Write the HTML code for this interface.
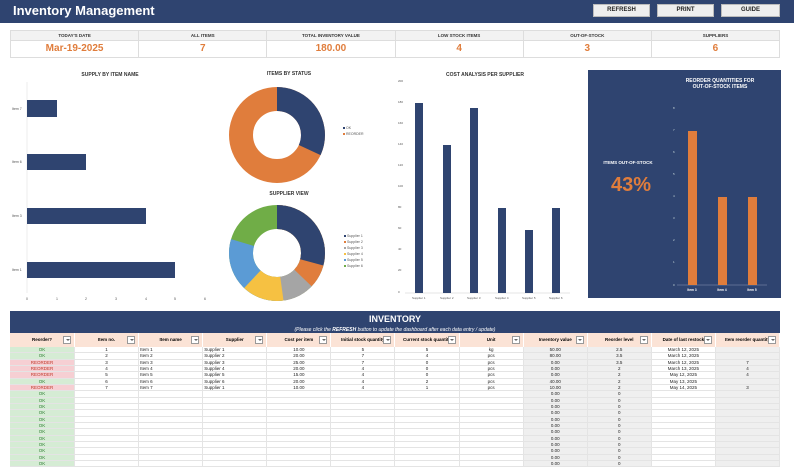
<!DOCTYPE html>
<html><head><meta charset="utf-8"><style>
*{margin:0;padding:0;box-sizing:border-box}
body{width:794px;height:462px;overflow:hidden;background:#fff;font-family:"Liberation Sans",sans-serif;position:relative}
.hdr{position:absolute;left:0;top:0;width:794px;height:23px;background:#2f4470}
.hdr h1{position:absolute;left:13px;top:3px;color:#fff;font-size:13px;font-weight:bold}
.btn{position:absolute;top:4px;height:13px;background:#eee;border:1px solid #bbb;font-size:6px;font-weight:bold;text-align:center;line-height:11px;color:#222}
.kpi{position:absolute;left:10px;top:30px;width:770px;height:28px;border:1px solid #ddd;display:flex}
.kpi div{flex:1;border-right:1px solid #ddd;text-align:center}
.kpi div:last-child{border-right:none}
.kpi b{display:block;height:10px;background:#f2f2f2;border-bottom:1px solid #ddd;font-size:4.5px;line-height:10px;color:#333}
.kpi span{display:block;font-size:10px;font-weight:bold;color:#e07d3c;line-height:16px}
svg text{font-family:"Liberation Sans",sans-serif}
.tb{position:absolute;left:10px;top:311px;width:770px}
.tbh{height:22px;background:#2f4470;color:#fff;text-align:center}
.tbh b{display:block;font-size:9px;padding-top:3px;line-height:10px}
.tbh i{display:block;font-size:5px;margin-top:1px;line-height:6px}
.hr{display:flex;height:14px}
.hr div{flex:0 0 64.1px;background:#fbe3d6;font-size:4.5px;font-weight:bold;position:relative;border-right:1px solid #fff;text-align:center;line-height:14px}
.hr div:first-child{flex-basis:65px}
.hr em{position:absolute;right:3px;top:3px;width:8px;height:8px;border:1px solid #999;background:#fff}
.hr em:after{content:"";position:absolute;left:1.5px;top:2px;border-left:2px solid transparent;border-right:2px solid transparent;border-top:2px solid #666}
.r{display:flex;height:6.33px;overflow:hidden}
.r div{flex:0 0 64.1px;font-size:4.5px;line-height:5.5px;height:6.33px;border-right:1px solid #e4e4e4;border-bottom:1px solid #e4e4e4;text-align:center;color:#222;white-space:nowrap;overflow:hidden}
.r div:first-child{flex-basis:65px}
.r div.l{text-align:left;padding-left:1px}
.r div.ok{background:#d5ecd4;color:#2e7d32}
.r div.ro{background:#f6cfd3;color:#c0392b}
.r div.g{background:#efefef}
</style></head><body>
<div class="hdr"><h1>Inventory Management</h1></div>
<div class="btn" style="left:593px;width:57px">REFRESH</div>
<div class="btn" style="left:657px;width:57px">PRINT</div>
<div class="btn" style="left:721px;width:59px">GUIDE</div>
<div class="kpi">
<div><b>TODAY'S DATE</b><span>Mar-19-2025</span></div>
<div><b>ALL ITEMS</b><span>7</span></div>
<div><b>TOTAL INVENTORY VALUE</b><span>180.00</span></div>
<div><b>LOW STOCK ITEMS</b><span>4</span></div>
<div><b>OUT-OF-STOCK</b><span>3</span></div>
<div><b>SUPPLIERS</b><span>6</span></div>
</div>
<svg style="position:absolute;left:0;top:0" width="794" height="311">
<g font-size="5" font-weight="bold" fill="#333" text-anchor="middle">
<text x="110" y="76">SUPPLY BY ITEM NAME</text>
<text x="289" y="75">ITEMS BY STATUS</text>
<text x="289" y="195">SUPPLIER VIEW</text>
<text x="485" y="76">COST ANALYSIS PER SUPPLIER</text>
</g>
<line x1="27" y1="82" x2="27" y2="293" stroke="#ddd" stroke-width="0.5"/>
<g fill="#2f4470">
<rect x="27" y="100" width="30" height="17"/>
<rect x="27" y="154" width="59" height="16"/>
<rect x="27" y="208" width="119" height="16"/>
<rect x="27" y="262" width="148" height="16"/>
</g>
<g font-size="3.5" fill="#555">
<text x="12" y="110">Item 7</text><text x="12" y="163">Item 6</text><text x="12" y="217">Item 3</text><text x="12" y="271">Item 1</text>
<text x="26" y="300">0</text><text x="56" y="300">1</text><text x="85" y="300">2</text><text x="115" y="300">3</text><text x="145" y="300">4</text><text x="174" y="300">5</text><text x="204" y="300">6</text>
</g>
<g transform="translate(277,135)">
<circle r="36" fill="none" stroke="#e07d3c" stroke-width="24"/>
<circle r="36" fill="none" stroke="#2f4470" stroke-width="24" stroke-dasharray="72 300" transform="rotate(-90)"/>
</g>
<g font-size="3.5" fill="#555"><rect x="343" y="127" width="2" height="2" fill="#2f4470"/><text x="346" y="129">OK</text>
<rect x="343" y="133" width="2" height="2" fill="#e07d3c"/><text x="346" y="135">REORDER</text></g>
<g transform="translate(277,253) rotate(-90)">
<circle r="36" fill="none" stroke="#70ad47" stroke-width="24"/>
<circle r="36" fill="none" stroke="#5b9bd5" stroke-width="24" stroke-dasharray="180 300"/>
<circle r="36" fill="none" stroke="#f6c142" stroke-width="24" stroke-dasharray="140 300"/>
<circle r="36" fill="none" stroke="#a5a5a5" stroke-width="24" stroke-dasharray="108 300"/>
<circle r="36" fill="none" stroke="#e07d3c" stroke-width="24" stroke-dasharray="84 300"/>
<circle r="36" fill="none" stroke="#2f4470" stroke-width="24" stroke-dasharray="66 300"/>
</g>
<g font-size="3.5" fill="#555">
<rect x="344" y="235" width="2" height="2" fill="#2f4470"/><text x="347" y="237">Supplier 1</text>
<rect x="344" y="241" width="2" height="2" fill="#e07d3c"/><text x="347" y="243">Supplier 2</text>
<rect x="344" y="247" width="2" height="2" fill="#a5a5a5"/><text x="347" y="249">Supplier 3</text>
<rect x="344" y="253" width="2" height="2" fill="#f6c142"/><text x="347" y="255">Supplier 4</text>
<rect x="344" y="259" width="2" height="2" fill="#5b9bd5"/><text x="347" y="261">Supplier 5</text>
<rect x="344" y="265" width="2" height="2" fill="#70ad47"/><text x="347" y="267">Supplier 6</text>
</g>
<line x1="405" y1="293" x2="570" y2="293" stroke="#ccc" stroke-width="0.5"/>
<g fill="#2f4470">
<rect x="415" y="103" width="8" height="190"/><rect x="443" y="145" width="8" height="148"/><rect x="470" y="108" width="8" height="185"/>
<rect x="498" y="208" width="8" height="85"/><rect x="525" y="230" width="8" height="63"/><rect x="552" y="208" width="8" height="85"/>
</g>
<g font-size="3" fill="#555">
<text x="398" y="82">200</text><text x="398" y="103">180</text><text x="398" y="124">160</text><text x="398" y="145">140</text><text x="398" y="166">120</text><text x="398" y="187">100</text><text x="398" y="208">80</text><text x="398" y="229">60</text><text x="398" y="250">40</text><text x="398" y="271">20</text><text x="398" y="293">0</text>
<text x="412" y="299">Supplier 1</text><text x="440" y="299">Supplier 2</text><text x="467" y="299">Supplier 3</text><text x="495" y="299">Supplier 4</text><text x="522" y="299">Supplier 5</text><text x="549" y="299">Supplier 6</text>
</g>
<rect x="588" y="70" width="193" height="228" fill="#2f4470"/>
<g fill="#fff" font-weight="bold" text-anchor="middle">
<text x="720" y="82" font-size="5">REORDER QUANTITIES FOR</text>
<text x="720" y="88" font-size="5">OUT-OF-STOCK ITEMS</text>
<text x="628" y="164" font-size="4.5">ITEMS OUT-OF-STOCK</text>
</g>
<text x="631" y="191" font-size="20" font-weight="bold" fill="#e07d3c" text-anchor="middle">43%</text>
<line x1="677" y1="285" x2="767" y2="285" stroke="#8a97b5" stroke-width="0.5"/>
<g fill="#e07d3c"><rect x="688" y="131" width="9" height="154"/><rect x="718" y="197" width="9" height="88"/><rect x="748" y="197" width="9" height="88"/></g>
<g font-size="3" fill="#cdd">
<text x="673" y="109">8</text><text x="673" y="131">7</text><text x="673" y="153">6</text><text x="673" y="175">5</text><text x="673" y="197">4</text><text x="673" y="219">3</text><text x="673" y="241">2</text><text x="673" y="263">1</text><text x="673" y="286">0</text>
</g>
<g font-size="3.2" fill="#fff" font-weight="bold" text-anchor="middle"><text x="692" y="291">Item 3</text><text x="722" y="291">Item 4</text><text x="752" y="291">Item 5</text></g>
</svg>
<div class="tb">
<div class="tbh"><b>INVENTORY</b><i>(Please click the <b style="display:inline;font-size:5px">REFRESH</b> button to update the dashboard after each data entry / update)</i></div>
<div class="hr"><div>Reorder?<em></em></div><div>Item no.<em></em></div><div>Item name<em></em></div><div>Supplier<em></em></div><div>Cost per item<em></em></div><div>Initial stock quantity<em></em></div><div>Current stock quantity<em></em></div><div>Unit<em></em></div><div>Inventory value<em></em></div><div>Reorder level<em></em></div><div>Date of last restock<em></em></div><div>Item reorder quantity<em></em></div></div>
<div class="r"><div class="ok">OK</div><div>1</div><div class="l">Item 1</div><div class="l">Supplier 1</div><div>10.00</div><div>5</div><div>5</div><div>kg</div><div class="g">50.00</div><div class="g">2.5</div><div>March 12, 2025</div><div class="g"></div></div>
<div class="r"><div class="ok">OK</div><div>2</div><div class="l">Item 2</div><div class="l">Supplier 2</div><div>20.00</div><div>7</div><div>4</div><div>pcs</div><div class="g">80.00</div><div class="g">3.5</div><div>March 12, 2025</div><div class="g"></div></div>
<div class="r"><div class="ro">REORDER</div><div>3</div><div class="l">Item 3</div><div class="l">Supplier 3</div><div>25.00</div><div>7</div><div>0</div><div>pcs</div><div class="g">0.00</div><div class="g">3.5</div><div>March 12, 2025</div><div class="g">7</div></div>
<div class="r"><div class="ro">REORDER</div><div>4</div><div class="l">Item 4</div><div class="l">Supplier 4</div><div>20.00</div><div>4</div><div>0</div><div>pcs</div><div class="g">0.00</div><div class="g">2</div><div>March 13, 2025</div><div class="g">4</div></div>
<div class="r"><div class="ro">REORDER</div><div>5</div><div class="l">Item 5</div><div class="l">Supplier 5</div><div>15.00</div><div>4</div><div>0</div><div>pcs</div><div class="g">0.00</div><div class="g">2</div><div>May 12, 2025</div><div class="g">4</div></div>
<div class="r"><div class="ok">OK</div><div>6</div><div class="l">Item 6</div><div class="l">Supplier 6</div><div>20.00</div><div>4</div><div>2</div><div>pcs</div><div class="g">40.00</div><div class="g">2</div><div>May 13, 2025</div><div class="g"></div></div>
<div class="r"><div class="ro">REORDER</div><div>7</div><div class="l">Item 7</div><div class="l">Supplier 1</div><div>10.00</div><div>4</div><div>1</div><div>pcs</div><div class="g">10.00</div><div class="g">2</div><div>May 14, 2025</div><div class="g">3</div></div>
<div class="r"><div class="ok">OK</div><div></div><div></div><div></div><div></div><div></div><div></div><div></div><div class="g">0.00</div><div class="g">0</div><div></div><div class="g"></div></div>
<div class="r"><div class="ok">OK</div><div></div><div></div><div></div><div></div><div></div><div></div><div></div><div class="g">0.00</div><div class="g">0</div><div></div><div class="g"></div></div>
<div class="r"><div class="ok">OK</div><div></div><div></div><div></div><div></div><div></div><div></div><div></div><div class="g">0.00</div><div class="g">0</div><div></div><div class="g"></div></div>
<div class="r"><div class="ok">OK</div><div></div><div></div><div></div><div></div><div></div><div></div><div></div><div class="g">0.00</div><div class="g">0</div><div></div><div class="g"></div></div>
<div class="r"><div class="ok">OK</div><div></div><div></div><div></div><div></div><div></div><div></div><div></div><div class="g">0.00</div><div class="g">0</div><div></div><div class="g"></div></div>
<div class="r"><div class="ok">OK</div><div></div><div></div><div></div><div></div><div></div><div></div><div></div><div class="g">0.00</div><div class="g">0</div><div></div><div class="g"></div></div>
<div class="r"><div class="ok">OK</div><div></div><div></div><div></div><div></div><div></div><div></div><div></div><div class="g">0.00</div><div class="g">0</div><div></div><div class="g"></div></div>
<div class="r"><div class="ok">OK</div><div></div><div></div><div></div><div></div><div></div><div></div><div></div><div class="g">0.00</div><div class="g">0</div><div></div><div class="g"></div></div>
<div class="r"><div class="ok">OK</div><div></div><div></div><div></div><div></div><div></div><div></div><div></div><div class="g">0.00</div><div class="g">0</div><div></div><div class="g"></div></div>
<div class="r"><div class="ok">OK</div><div></div><div></div><div></div><div></div><div></div><div></div><div></div><div class="g">0.00</div><div class="g">0</div><div></div><div class="g"></div></div>
<div class="r"><div class="ok">OK</div><div></div><div></div><div></div><div></div><div></div><div></div><div></div><div class="g">0.00</div><div class="g">0</div><div></div><div class="g"></div></div>
<div class="r"><div class="ok">OK</div><div></div><div></div><div></div><div></div><div></div><div></div><div></div><div class="g">0.00</div><div class="g">0</div><div></div><div class="g"></div></div>
</div>
</body></html>
